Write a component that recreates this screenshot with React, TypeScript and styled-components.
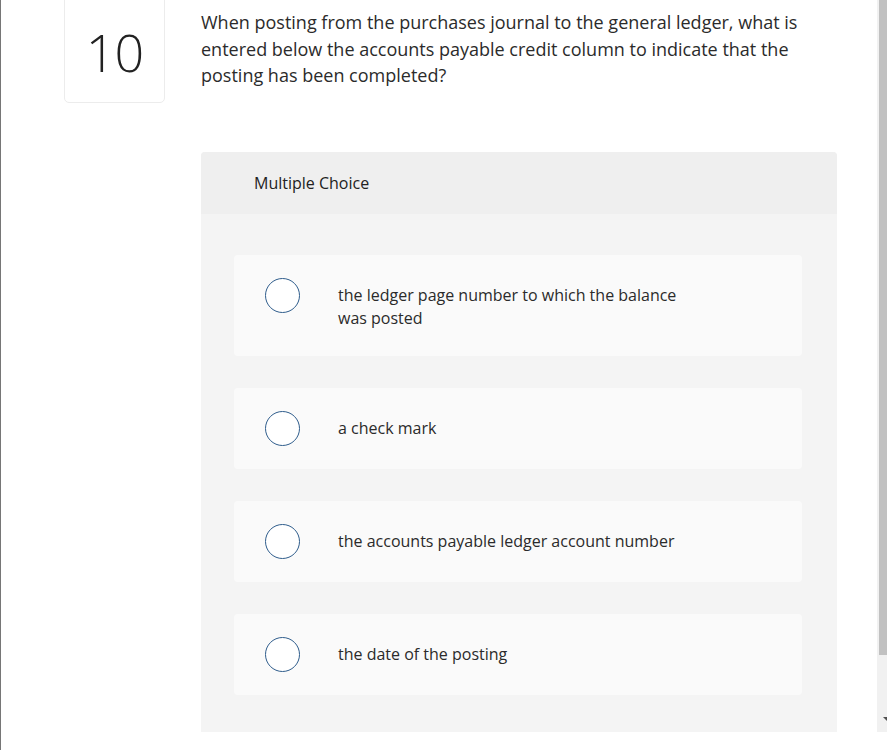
import React from 'react';
import styled, { createGlobalStyle } from 'styled-components';

const GlobalStyle = createGlobalStyle`
  html, body {
    margin: 0;
    padding: 0;
    background: #ffffff;
    overflow: hidden;
  }
  body {
    font-family: "Open Sans", Lato, Arial, sans-serif;
    color: #2b2b2b;
  }
`;

const Frame = styled.div`
  width: 887px;
  height: 750px;
  display: flex;
  background: #ffffff;
  border-left: 1px solid #767676;
  box-sizing: border-box;
  overflow: hidden;
`;

const Viewport = styled.div`
  flex: 1;
  height: 732px;
  display: grid;
  grid-template-columns: 101px 636px;
  column-gap: 36px;
  align-content: start;
  padding-left: 63px;
`;

const NumberBox = styled.div`
  height: 113px;
  margin-top: -10px;
  box-sizing: border-box;
  border: 1px solid #ececec;
  border-radius: 5px;
  display: flex;
  align-items: center;
  justify-content: center;
  padding-top: 10px;
`;

const NumberText = styled.span`
  font-weight: 300;
  font-size: 52px;
  letter-spacing: -1px;
  color: #222222;
`;

const QuestionColumn = styled.div`
  display: flex;
  flex-direction: column;
  padding-top: 9px;
`;

const QuestionText = styled.p`
  margin: 0;
  font-size: 18px;
  line-height: 26.5px;
  color: #2b2b2b;
`;

const Card = styled.section`
  margin-top: 63px;
  background: #f4f4f4;
  border-radius: 4px 4px 0 0;
  height: 580px;
  display: flex;
  flex-direction: column;
`;

const CardHeader = styled.div`
  height: 62px;
  background: #efefef;
  border-radius: 4px 4px 0 0;
  display: flex;
  align-items: center;
  padding-left: 53px;
  font-size: 16px;
  color: #222222;
`;

const OptionList = styled.ul`
  list-style: none;
  margin: 0;
  padding: 41px 35px 0 33px;
  display: flex;
  flex-direction: column;
  gap: 32px;
`;

const Option = styled.li`
  background: #fafafa;
  border-radius: 4px;
  display: flex;
  align-items: flex-start;
  gap: 38px;
  padding: 23px 24px 23px 31px;
`;

const Radio = styled.span`
  flex: none;
  width: 35px;
  height: 35px;
  box-sizing: border-box;
  border-radius: 50%;
  border: 1.5px solid #2f5d8c;
  background: #ffffff;
`;

const OptionText = styled.span`
  max-width: 350px;
  padding: 6px 0 3px;
  font-size: 16px;
  line-height: 23px;
  color: #2b2b2b;
`;

const Scrollbar = styled.div`
  width: 10px;
  height: 732px;
  background: #f1f1f1;
  display: flex;
  flex-direction: column;
  align-items: flex-end;
  justify-content: space-between;
`;

const Thumb = styled.div`
  width: 8px;
  height: 655px;
  background: #c1c1c1;
`;

const ArrowDown = styled.div`
  width: 0;
  height: 0;
  margin-bottom: 11px;
  border-left: 4px solid transparent;
  border-top: 4px solid #505050;
`;

const options = [
  'the ledger page number to which the balance was posted',
  'a check mark',
  'the accounts payable ledger account number',
  'the date of the posting',
];

const App: React.FC = () => {
  return (
    <>
      <GlobalStyle />
      <Frame>
        <Viewport>
          <NumberBox>
            <NumberText>10</NumberText>
          </NumberBox>
          <QuestionColumn>
            <QuestionText>
              When posting from the purchases journal to the general ledger, what is entered below
              the accounts payable credit column to indicate that the posting has been completed?
            </QuestionText>
            <Card>
              <CardHeader>Multiple Choice</CardHeader>
              <OptionList>
                {options.map((text, i) => (
                  <Option key={i}>
                    <Radio />
                    <OptionText>{text}</OptionText>
                  </Option>
                ))}
              </OptionList>
            </Card>
          </QuestionColumn>
        </Viewport>
        <Scrollbar>
          <Thumb />
          <ArrowDown />
        </Scrollbar>
      </Frame>
    </>
  );
};

export default App;
